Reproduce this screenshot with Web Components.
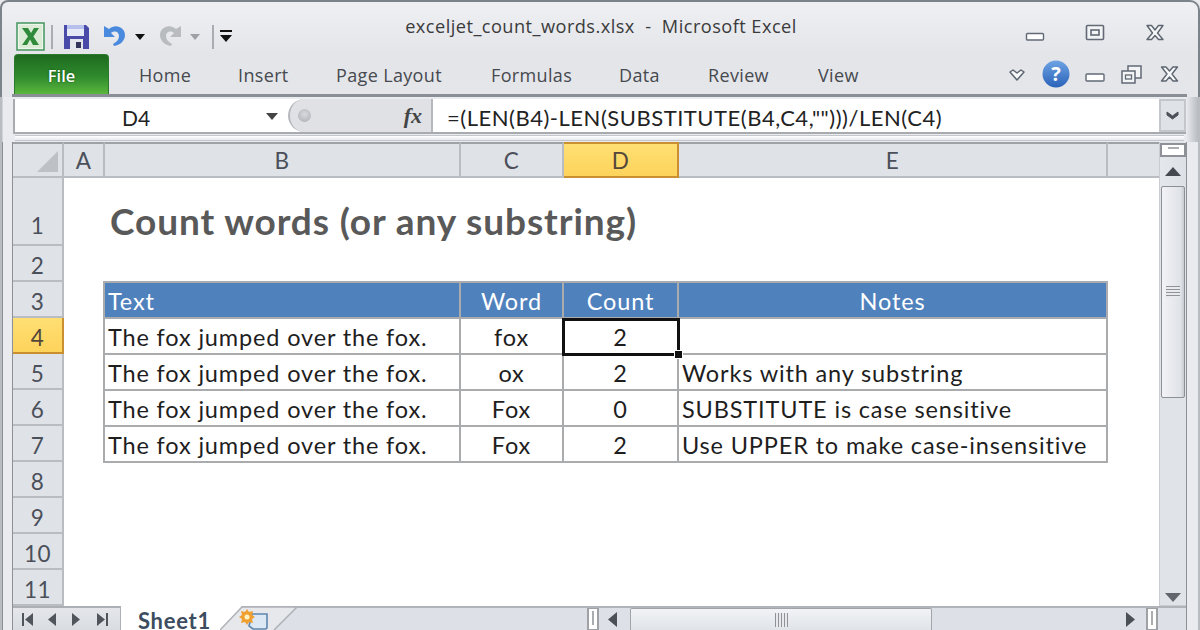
<!DOCTYPE html>
<html><head><meta charset="utf-8"><title>Excel</title>
<style>html,body{margin:0;padding:0;background:#fff}body{width:1200px;height:630px;overflow:hidden;font-family:"Open Sans","Liberation Sans",sans-serif}</style>
</head><body>
<x-app>
  <x-titlebar slot="top">exceljet_count_words.xlsx  -  Microsoft Excel</x-titlebar>
  <x-ribbon slot="top">
    <x-tab>Home</x-tab><x-tab>Insert</x-tab><x-tab>Page Layout</x-tab><x-tab>Formulas</x-tab><x-tab>Data</x-tab><x-tab>Review</x-tab><x-tab>View</x-tab>
  </x-ribbon>
  <x-formulabar slot="top" name="D4">=(LEN(B4)-LEN(SUBSTITUTE(B4,C4,"")))/LEN(C4)</x-formulabar>
  <x-sheet slot="grid"></x-sheet>
  <x-vscroll slot="scroll"></x-vscroll>
  <x-sheetbar slot="bottom"></x-sheetbar>
</x-app>
<script>
function def(name, css, html, init){
  customElements.define(name, class extends HTMLElement{
    constructor(){super();const s=this.attachShadow({mode:'open'});s.innerHTML='<style>'+css+'</style>'+html;}
    connectedCallback(){if(init)init.call(this,this.shadowRoot);}
  });
}
def('x-app',`
:host{display:flex;flex-direction:column;width:1200px;height:630px;overflow:hidden;background:#e8eaed}
.mid{display:flex;height:464px;padding-left:13px;background:linear-gradient(90deg,#b9bcc1 0,#b9bcc1 2px,#8d9197 2px,#8d9197 3px,#e9ebee 3px,#e9ebee 12px,#8d9197 12px,#8d9197 13px)}
.edge{width:14px;background:linear-gradient(90deg,#8d9197 0,#8d9197 1px,#e9ebee 1px,#e9ebee 12px,#b9bcc1 12px)}
.foot{display:flex;padding-left:13px;height:24px;background:linear-gradient(90deg,#b9bcc1 0,#b9bcc1 2px,#8d9197 2px,#8d9197 3px,#e9ebee 3px,#e9ebee 12px,#8d9197 12px,#8d9197 13px)}
`,`<slot name="top"></slot><div class="mid"><slot name="grid"></slot><slot name="scroll"></slot><div class="edge"></div></div><div class="foot"><slot name="bottom"></slot><div class="edge"></div></div>`);

def('x-titlebar',`
:host{display:flex;align-items:flex-start;height:54px;box-sizing:border-box;border:solid #7d838a;border-width:2px 2px 0;border-radius:8px 10px 0 0;background:linear-gradient(180deg,#eef0f3,#e3e5e9);position:relative}
.qat{display:flex;align-items:center;gap:0;padding:17px 0 0 14px;width:394px;box-sizing:border-box;height:52px}
.sep{width:2px;height:24px;background:#a9adb2}
.t{width:410px;text-align:center;font:18.2px "Open Sans",sans-serif;color:#3b3b3b;padding-top:12px;white-space:pre;letter-spacing:.025em}
.win{margin-left:auto;display:flex;padding:22px 0 0 0;width:161px;gap:0;margin-right:12px}
svg{display:block;flex:none}
`,`<div class="qat">
<svg width="29" height="29" viewBox="0 0 29 29" style="margin-right:6px"><rect x="1" y="1" width="27" height="27" fill="#eef5ea" stroke="#4e9a68" stroke-width="1.6"/><rect x="3" y="3" width="23" height="23" fill="#dcebd6"/><path d="M6 6h6l3 5 3-5h5l-5.6 8.4L23 23h-6l-3-5.500L11 23H6l6-8.600z" fill="#2f8a3a"/></svg>
<div class="sep" style="margin-right:11px"></div>
<svg width="25" height="25" viewBox="0 0 25 25" style="margin-right:14px"><path d="M0 1h22l3 3v21H0z" fill="#4a4aa8"/><rect x="3" y="1" width="17" height="11" fill="#e6e9f6"/><rect x="3" y="1" width="17" height="4" fill="#b7c0ec"/><rect x="6" y="15" width="13" height="10" fill="#e5e5ec"/><rect x="12" y="18" width="5" height="6" fill="#33335c"/></svg>
<svg width="23" height="23" viewBox="0 0 23 23"><path d="M1 1v11h11L8 8c4-3 8-1 8 3 0 3-2 6-6 8l1 2c6-1 11-5 11-11C22 3 13-2 6 4z" fill="#4a8ade"/></svg>
<svg width="12" height="6" viewBox="0 0 12 6" style="margin-left:8px;margin-right:13px"><path d="M1 0h10L6 6z" fill="#111"/></svg>
<svg width="23" height="23" viewBox="0 0 23 23"><path d="M22 1v11H11l4-4c-4-3-8-1-8 3 0 3 2 6 6 8l-1 2C6 20 1 16 1 10 1 3 10-2 17 4z" fill="#b9bcbf"/></svg>
<svg width="10" height="6" viewBox="0 0 10 6" style="margin-left:8px;margin-right:12px"><path d="M0 0h10L5 6z" fill="#9da0a4"/></svg>
<div class="sep" style="margin-right:6px"></div>
<svg width="12" height="13" viewBox="0 0 12 13"><rect x="0" y="0" width="12" height="2" fill="#111"/><path d="M0 5h12L6 12z" fill="#111"/></svg>
</div>
<div class="t"><slot></slot></div>
<div class="win">
<svg width="20" height="20" viewBox="0 0 20 20" style="margin:8px 40px 0 0"><rect x="1.500" y="1.500" width="17" height="6.500" rx="1" fill="#fff" stroke="#626a75" stroke-width="1.400"/></svg>
<svg width="20" height="18" viewBox="0 0 20 18" style="margin-right:40px"><rect x="1.500" y="1.500" width="17" height="14" rx="1" fill="#f3f4f6" stroke="#626a75" stroke-width="1.600"/><rect x="6" y="6" width="8" height="5" fill="none" stroke="#626a75" stroke-width="1.600"/></svg>
<svg width="20" height="18" viewBox="0 0 20 18"><path d="M2 1.500h4.500L10 6l3.500-4.500H18L12.500 9l5.500 6.500h-4.500L10 11.500 6.500 15.500H2L7.500 9z" fill="#f6f7f8" stroke="#5d6570" stroke-width="1.400" stroke-linejoin="round"/></svg>
</div>`);

def('x-tab',`:host{display:block;font:18px "Open Sans",sans-serif;letter-spacing:.35px;color:#46494f;white-space:nowrap;line-height:24px}`,`<slot></slot>`);

def('x-ribbon',`
:host{display:flex;height:43px;box-sizing:border-box;border:solid #7d838a;border-width:0 2px;padding:0 0 3px 12px;background:linear-gradient(#8a8f96,#8a8f96) no-repeat 10px 100%/1175px 3px,linear-gradient(180deg,#e3e5e9,#e4e6e9);align-items:stretch}
.file{width:95px;box-sizing:border-box;border:1px solid #2b7a2e;border-bottom:0;border-radius:4px 4px 0 0;background:linear-gradient(180deg,#1e6a1f,#2f8a2d 55%,#5ab63c);color:#fff;font:600 16.400px "Open Sans",sans-serif;text-align:center;padding-top:9px;text-shadow:0 0 2px #0b4a10}
.tabs{display:grid;grid-template-columns:99px 98px 155px 128px 89px 110px 60px;padding:9px 0 0 30px}
.ctl{margin-left:auto;display:flex;align-items:flex-start;padding:6px 19px 0 0}
svg{display:block;flex:none}
`,`<div class="file">File</div><div class="tabs"><slot></slot></div>
<div class="ctl">
<svg width="16" height="12" viewBox="0 0 16 12" style="margin:9px 17px 0 0"><path d="M1 3l3-2 4 3 4-3 3 2-7 8z" fill="#f7f8f9" stroke="#5d6570" stroke-width="1.500" stroke-linejoin="round"/></svg>
<svg width="28" height="28" viewBox="0 0 28 28" style="margin-right:15px"><defs><linearGradient id="h" x1="0" y1="0" x2="0" y2="1"><stop offset="0" stop-color="#6ea3e4"/><stop offset="1" stop-color="#2a62b8"/></linearGradient></defs><circle cx="14" cy="14" r="13.500" fill="url(#h)"/><text x="14" y="21" text-anchor="middle" font-family="Open Sans" font-weight="700" font-size="20" fill="#fff">?</text></svg>
<svg width="20" height="10" viewBox="0 0 20 10" style="margin:13px 16px 0 0"><rect x="1" y="1" width="18" height="7" rx="1" fill="#fff" stroke="#626a75" stroke-width="1.400"/></svg>
<svg width="21" height="20" viewBox="0 0 21 20" style="margin:5px 18px 0 0"><rect x="7" y="1" width="13" height="12" fill="#f3f4f6" stroke="#626a75" stroke-width="1.500"/><rect x="1" y="6" width="13" height="12" fill="#f3f4f6" stroke="#626a75" stroke-width="1.500"/><rect x="4.500" y="10" width="6" height="4" fill="none" stroke="#626a75" stroke-width="1.300"/></svg>
<svg width="19" height="16" viewBox="0 0 19 16" style="margin-top:6px"><path d="M1.500 1h4.500L9.500 5 13 1h4.500L12 8l5.500 7H13L9.500 11 6 15H1.500L7 8z" fill="#f6f7f8" stroke="#5d6570" stroke-width="1.400" stroke-linejoin="round"/></svg>
</div>`);

def('x-formulabar',`
:host{display:block;height:45px;box-sizing:border-box;padding:2px 14px 0 13px;background:linear-gradient(90deg,#b9bcc1 0,#b9bcc1 2px,#e9ebee 3px,#e9ebee 1186px,#b9bcc1 1198px)}
.row{display:flex;border-left:2px solid #a7abb0;background:#fff;border-bottom:2px solid #a7abb0;box-sizing:content-box;height:33px}
.name{width:273px;box-sizing:border-box;display:flex;align-items:center;padding:3px 0 0 107px;font:21px "Lato",sans-serif;color:#222;position:relative}
.name svg{position:absolute;left:251px;top:14px}
.fx{width:145px;background:#dfe1e5;border-radius:18px 0 0 18px;box-sizing:border-box;border-left:2px solid #b5b8bd;border-right:2px solid #b5b8bd;display:flex;align-items:center;justify-content:space-between;padding:0 9px 0 8px}
.dot{width:13px;height:13px;border-radius:50%;background:radial-gradient(circle at 50% 40%,#d8dade,#a9acb1)}
.f{font:italic 700 22px "Liberation Serif",serif;color:#444}
.val{flex:1;padding:2px 0 0 14px;font:22px "Lato",sans-serif;letter-spacing:.52px;color:#222;line-height:33px;white-space:pre}
.btn{width:27px;background:#dfe2e6;box-sizing:border-box;border:2px solid #c3c6cb;display:flex;align-items:center;justify-content:center;margin-left:1px}
.split{height:6px;margin:1px 2px 0 2px;background:linear-gradient(180deg,#fff,#e5e8f0);border:solid #c3c6cb;border-width:1px 0;box-sizing:border-box}
`,`<div class="row"><div class="name"></div><div class="fx"><span class="dot"></span><span class="f">fx</span></div><div class="val"><slot></slot></div>
<div class="btn"><svg width="13" height="9" viewBox="0 0 13 9"><path d="M1 1l5.500 4L12 1v3L6.500 8 1 4z" fill="#4c5159" stroke="#4c5159"/></svg></div></div><div class="split"></div>`,
function(s){s.querySelector('.name').innerHTML=this.getAttribute('name')+'<svg width="12" height="7" viewBox="0 0 12 7"><path d="M0 0h12L6 7z" fill="#444"/></svg>';});

def('x-cell',`
:host{display:flex;align-items:center;background:#fff;font:23.5px "Lato",sans-serif;letter-spacing:.85px;color:#1e1e1e;white-space:nowrap;padding:2px 3px 0 3px;position:relative;box-sizing:border-box;overflow:visible}
:host([center]){justify-content:center}
:host([head]){background:#4f81bd;color:#fff}
:host([sel]){z-index:2}
:host([sel])::after{content:"";position:absolute;inset:-1px -3px -3px -2px;border:3px solid #111;pointer-events:none}
:host([sel])::before{content:"";position:absolute;right:-6px;bottom:-6px;width:7px;height:7px;background:#111;border:1px solid #fff;z-index:1}
`,`<slot></slot>`);

def('x-sheet',`
:host{display:grid;width:1146px;height:464px;background:#fff;grid-template-columns:51px 41px 356px 103px 115px 429px 51px;grid-template-rows:36px 68px repeat(10,36px);position:relative}
.h{background:#dfe2e6;border:solid #b9bcc1;border-width:0 2px 2px 0;box-sizing:border-box;display:flex;align-items:center;justify-content:center;font:22.5px "Lato",sans-serif;letter-spacing:.5px;color:#4a4f5a;padding-top:4px}
.h.top{border-top:2px solid #9ea2a7;padding-top:1px}
.h.s{background:linear-gradient(180deg,#ffdf73,#fdd35b);border-color:#c98f31;color:#54473a}
.h.one{align-items:flex-end;padding:0 0 5px}
.h.corner{justify-content:flex-end;align-items:flex-end;padding:0 4px 4px 0}
.h.r{border-right:0}
.title{grid-column:3/8;grid-row:2;align-self:end;padding:0 0 3px 5px;font:700 37px "Lato",sans-serif;letter-spacing:.9px;color:#595959;white-space:nowrap}
.tbl{grid-column:3/7;grid-row:4/9;margin:-1px 0 -1px -2px;display:grid;grid-template-columns:354px 101px 113px 427px;grid-template-rows:repeat(5,34px);gap:2px;padding:2px;background:#a9abad;position:relative;z-index:1}
`,`<div class="tbl"></div>`,
function(s){
  const mk=(c,t)=>{const d=document.createElement('div');d.className=c;if(t)d.textContent=t;return d;};
  const frag=document.createDocumentFragment();
  const corner=mk('h top corner');corner.innerHTML='<svg width="21" height="21" viewBox="0 0 21 21"><path d="M21 0v21H0z" fill="#bdc0c4"/></svg>';
  corner.style.gridArea='1/1';frag.appendChild(corner);
  ['A','B','C','D','E',''].forEach((t,i)=>{const d=mk('h top'+(t==='D'?' s':'')+(t===''?' r':''),t);d.style.gridArea='1/'+(i+2);frag.appendChild(d);});
  for(let r=1;r<=11;r++){const d=mk('h'+(r===4?' s':'')+(r===1?' one':''),String(r));d.style.gridArea=(r+1)+'/1';frag.appendChild(d);}
  const ti=mk('title','Count words (or any substring)');frag.appendChild(ti);
  s.appendChild(frag);
  const rows=[['Text','Word','Count','Notes'],['The fox jumped over the fox.','fox','2',''],['The fox jumped over the fox.','ox','2','Works with any substring'],['The fox jumped over the fox.','Fox','0','SUBSTITUTE is case sensitive'],['The fox jumped over the fox.','Fox','2','Use UPPER to make case-insensitive']];
  const tbl=s.querySelector('.tbl');
  rows.forEach((row,ri)=>row.forEach((t,ci)=>{
    const c=document.createElement('x-cell');c.textContent=t;
    if(ri===0)c.setAttribute('head','');
    if(ci===1||ci===2||(ri===0&&ci===3))c.setAttribute('center','');
    if(ri===1&&ci===2)c.setAttribute('sel','');
    tbl.appendChild(c);
  }));
});

def('x-vscroll',`
:host{display:flex;flex-direction:column;width:27px;height:464px;background:#e0e3e8;box-sizing:border-box;border-left:1px solid #c9ccd1}
.sp{height:14px;margin-top:1px;box-sizing:border-box;border:2px solid #8e9298;background:#fff;display:flex;justify-content:center;padding-top:2px}
.sp i{display:block;width:11px;height:2px;background:#a9acb1}
.b{height:29px;display:flex;align-items:center;justify-content:center;background:linear-gradient(90deg,#e4e7eb,#dde0e6)}
.thumb{margin:0 1px;height:212px;box-sizing:border-box;border:1px solid #8d9197;border-radius:2px;background:linear-gradient(90deg,#f2f3f6,#dfe2e7 85%,#c8cbd1);display:flex;align-items:center;justify-content:center}
.g{width:14px;height:12px;background:repeating-linear-gradient(180deg,#8f9297 0,#8f9297 1px,#e8e9ec 1px,#e8e9ec 3px)}
.t{flex:1}
.d{border-bottom:1px solid #c9ccd1;height:9px;padding:11px 0 3px;display:flex;justify-content:center}
`,`<div class="sp"><i></i></div><div class="b"><svg width="16" height="9" viewBox="0 0 16 9"><path d="M8 0l8 9H0z" fill="#454a50"/></svg></div>
<div class="thumb"><div class="g"></div></div><div class="t"></div>
<div class="d"><svg width="16" height="9" viewBox="0 0 16 9"><path d="M0 0h16L8 9z" fill="#62666c"/></svg></div>`);

def('x-sheetbar',`
:host{display:flex;flex:1;height:24px;background:#fff;overflow:hidden}
.nav{width:108px;box-sizing:border-box;border-top:2px solid #adb0b5;border-right:1px solid #adb0b5;background:linear-gradient(180deg,#e4e6ea,#d9dce1);display:flex;align-items:center;padding:0 0 0 9px;gap:13px}
.nav svg{display:block;flex:none}
.sh{width:99px;box-sizing:border-box;padding:3px 0 0 17px;font:700 22px "Lato",sans-serif;letter-spacing:.7px;color:#3d4d60;line-height:24px;height:24px;white-space:nowrap}
.tr{flex:1;display:flex;align-items:center;background:#dde0e6;border-top:2px solid #b0b3b8;height:24px;box-sizing:border-box}
.nw{display:block;flex:none;margin-top:-2px;align-self:flex-start}
.fill{flex:1}
.spl{width:12px;height:100%;box-sizing:border-box;border:2px solid #9ea2a7;border-width:1px 2px;background:#fff;display:flex;justify-content:center;flex:none}
.spl i{width:2px;height:14px;background:#a9acb1;margin-top:2px}
.th{width:302px;height:22px;flex:none;box-sizing:border-box;border:1px solid #a2a6ab;border-bottom:0;border-radius:2px 2px 0 0;background:linear-gradient(180deg,#f1f3f6,#e0e3e8);display:flex;align-items:center;justify-content:center}
.gr{width:13px;height:14px;background:repeating-linear-gradient(90deg,#8f9297 0,#8f9297 1px,#e8e9ec 1px,#e8e9ec 3px)}
.tr svg{flex:none}
`,`<div class="nav">
<svg width="12" height="13" viewBox="0 0 12 13"><rect width="2" height="13" fill="#50555c"/><path d="M11 0v13L3 6.500z" fill="#50555c"/></svg>
<svg width="8" height="13" viewBox="0 0 8 13" style="margin-left:1px"><path d="M8 0v13L0 6.500z" fill="#50555c"/></svg>
<svg width="8" height="13" viewBox="0 0 8 13" style="margin-left:3px"><path d="M0 0v13l8-6.500z" fill="#50555c"/></svg>
<svg width="12" height="13" viewBox="0 0 12 13" style="margin-left:3px"><rect x="10" width="2" height="13" fill="#50555c"/><path d="M1 0v13l8-6.500z" fill="#50555c"/></svg>
</div>
<div class="sh">Sheet1</div>
<div class="tr">
<svg class="nw" width="79" height="24" viewBox="0 0 79 24"><path d="M0 0h22L0 24z" fill="#fff"/><path d="M0 24L22 1h55L54 24z" fill="#e6e8ec"/><path d="M0 24L22 1h55L54 24" fill="none" stroke="#aeb1b6" stroke-width="1.500"/><path d="M32 8h15v13a2 2 0 0 1-2 2H33l-4-3z" fill="#dce9f5" stroke="#5f86ad" stroke-width="1.600"/><path d="M27 3l2 3 4-1-1 4 3 2-3 2 1 4-4-1-2 3-2-3-4 1 1-4-3-2 3-2-1-4 4 1z" fill="#f0a030"/><circle cx="27" cy="11" r="2.500" fill="#fff3c4"/></svg>
<div class="fill"></div>
<div class="spl"><i></i></div>
<svg width="9" height="15" viewBox="0 0 9 15" style="margin:0 13px 0 9px"><path d="M9 0v15L0 7.500z" fill="#4b5056"/></svg>
<div class="th"><div class="gr"></div></div>
<svg width="9" height="15" viewBox="0 0 9 15" style="margin:0 11px 0 194px"><path d="M0 0v15l9-7.500z" fill="#4b5056"/></svg>
<div class="spl"><i></i></div>
<div style="width:28px;align-self:stretch"></div>
</div>`);
</script>
</body></html>
